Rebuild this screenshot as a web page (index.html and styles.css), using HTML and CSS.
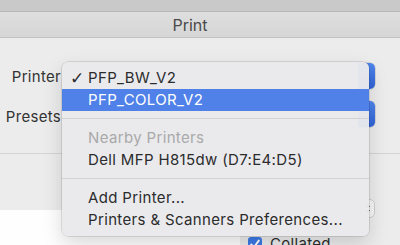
FILE: index.html
```html
<!DOCTYPE html>
<html lang="en">
<head>
    <meta charset="UTF-8">
    <meta name="viewport" content="width=device-width, initial-scale=1.0">
    <title>Print</title>
    <link rel="stylesheet" href="styles.css">
</head>
<body>
    <!-- Strip of the window behind -->
    <div class="window-top"></div>

    <!-- Title bar -->
    <div class="titlebar">Print</div>

    <div class="dialog">
        <!-- Printer / Presets rows -->
        <div class="field-row printer-row">
            <div class="field-label">Printer</div>
            <div class="popup-button"><span class="popup-cap"></span></div>
        </div>
        <div class="field-row presets-row">
            <div class="field-label">Presets</div>
            <div class="popup-button"><span class="popup-cap"></span></div>
        </div>

        <!-- Lower section -->
        <div class="lower">
            <div class="preview-pane">
                <div class="preview-page"></div>
            </div>
            <div class="settings-pane">
                <div class="copies-row">
                    <div class="stepper">
                        <span class="arrow-up"></span>
                        <span class="arrow-down"></span>
                    </div>
                </div>
                <label class="checkbox-row">
                    <span class="checkbox">
                        <svg viewBox="0 0 14 14" width="14" height="14">
                            <path d="M3.2 7.4 L6 10.2 L10.8 3.6" fill="none" stroke="#fff" stroke-width="1.9" stroke-linecap="round" stroke-linejoin="round"/>
                        </svg>
                    </span>
                    Collated
                </label>
            </div>
        </div>

        <!-- Open printer menu -->
        <div class="menu">
            <div class="menu-item"><span class="check">✓</span>PFP_BW_V2</div>
            <div class="menu-item selected">PFP_COLOR_V2</div>
            <div class="menu-separator"></div>
            <div class="menu-item disabled">Nearby Printers</div>
            <div class="menu-item">Dell MFP H815dw (D7:E4:D5)</div>
            <div class="menu-separator"></div>
            <div class="menu-item">Add Printer...</div>
            <div class="menu-item">Printers &amp; Scanners Preferences...</div>
        </div>
    </div>
</body>
</html>
```

FILE: styles.css
```css
/* General Styles */
body {
    font-family: Inter, 'Liberation Sans', sans-serif;
    margin: 0;
    padding: 0;
    background-color: #ececec;
    color: #2e2e2e;
    width: 400px;
    height: 245px;
    overflow: hidden;
}

.window-top {
    height: 11px;
    background-color: #c9c9c9;
    border-bottom: 1px solid #b9b9b9;
}

.titlebar {
    height: 25px;
    line-height: 26px;
    padding-right: 20px;
    text-align: center;
    font-size: 16px;
    color: #4a4a4a;
    background: linear-gradient(#dedede, #d6d6d6);
    border-bottom: 1px solid #c2c2c2;
}

.dialog {
    position: relative;
    background-color: #ececec;
    height: 207px;
}

/* Printer / Presets rows */
.field-row {
    display: flex;
    align-items: center;
    height: 26px;
}

.printer-row {
    padding-top: 25px;
}

.presets-row {
    margin-top: 12px;
}

.field-label {
    width: 61px;
    text-align: right;
    font-size: 15px;
    letter-spacing: 0.3px;
    color: #333;
    margin-right: 4px;
}

.presets-row .field-label {
    padding-top: 4px;
}

.popup-button {
    display: flex;
    justify-content: flex-end;
    width: 310px;
    height: 100%;
    background-color: #fff;
    border-radius: 5px;
    box-shadow: 0 0 0 0.5px rgba(0, 0, 0, 0.2);
}

.popup-cap {
    width: 17px;
    height: 100%;
    border-radius: 0 5px 5px 0;
    background: linear-gradient(#4f86ec, #2f63d8);
}

/* Lower section */
.lower {
    display: flex;
    margin-top: 26px;
    border-top: 1px solid #d4d4d4;
    height: 91px;
}

.preview-pane {
    width: 240px;
    padding-top: 56px;
}

.preview-page {
    height: 40px;
    background-color: #fefefe;
}

.settings-pane {
    flex: 1;
    padding-left: 8px;
}

.copies-row {
    display: flex;
    justify-content: flex-end;
    padding-top: 46px;
    padding-right: 26px;
}

.stepper {
    display: flex;
    flex-direction: column;
    align-items: center;
    justify-content: center;
    gap: 3px;
    width: 12px;
    height: 17px;
    background-color: #f6f6f6;
    border-radius: 4px;
    box-shadow: 0 0 0 0.5px rgba(0, 0, 0, 0.25);
}

.arrow-up,
.arrow-down {
    width: 0;
    height: 0;
    border-left: 2.5px solid transparent;
    border-right: 2.5px solid transparent;
}

.arrow-up {
    border-bottom: 3px solid #444;
}

.arrow-down {
    border-top: 3px solid #444;
}

.checkbox-row {
    display: flex;
    align-items: flex-start;
    gap: 8px;
    margin-top: 19px;
    font-size: 15px;
    line-height: 15px;
    letter-spacing: 0.3px;
    color: #2e2e2e;
}

.checkbox {
    display: flex;
    flex-shrink: 0;
    width: 14px;
    height: 14px;
    margin-top: 1px;
    border-radius: 3px;
    background-color: #3c7ae8;
}

/* Printer menu */
.menu {
    position: absolute;
    left: 62px;
    top: 24px;
    width: 307px;
    padding: 5px 0;
    box-sizing: border-box;
    background-color: rgba(233, 233, 236, 0.97);
    border-radius: 6px;
    box-shadow: 0 0 0 0.5px rgba(0, 0, 0, 0.2), 0 8px 20px rgba(0, 0, 0, 0.15);
    font-size: 15px;
    letter-spacing: 0.35px;
}

.menu-item {
    position: relative;
    height: 22px;
    line-height: 22px;
    padding-left: 26px;
    color: #2c2c2c;
    white-space: nowrap;
}

.menu-item.selected {
    background-color: #4f81e8;
    color: #fff;
}

.menu-item.disabled {
    color: #a9a9a9;
}

.check {
    position: absolute;
    left: 8px;
    top: 0;
    font-family: 'DejaVu Sans', sans-serif;
    font-size: 17px;
    letter-spacing: 0;
}

.menu-separator {
    height: 1px;
    margin: 7px 0 8px;
    background-color: #d2d2d4;
}
```
